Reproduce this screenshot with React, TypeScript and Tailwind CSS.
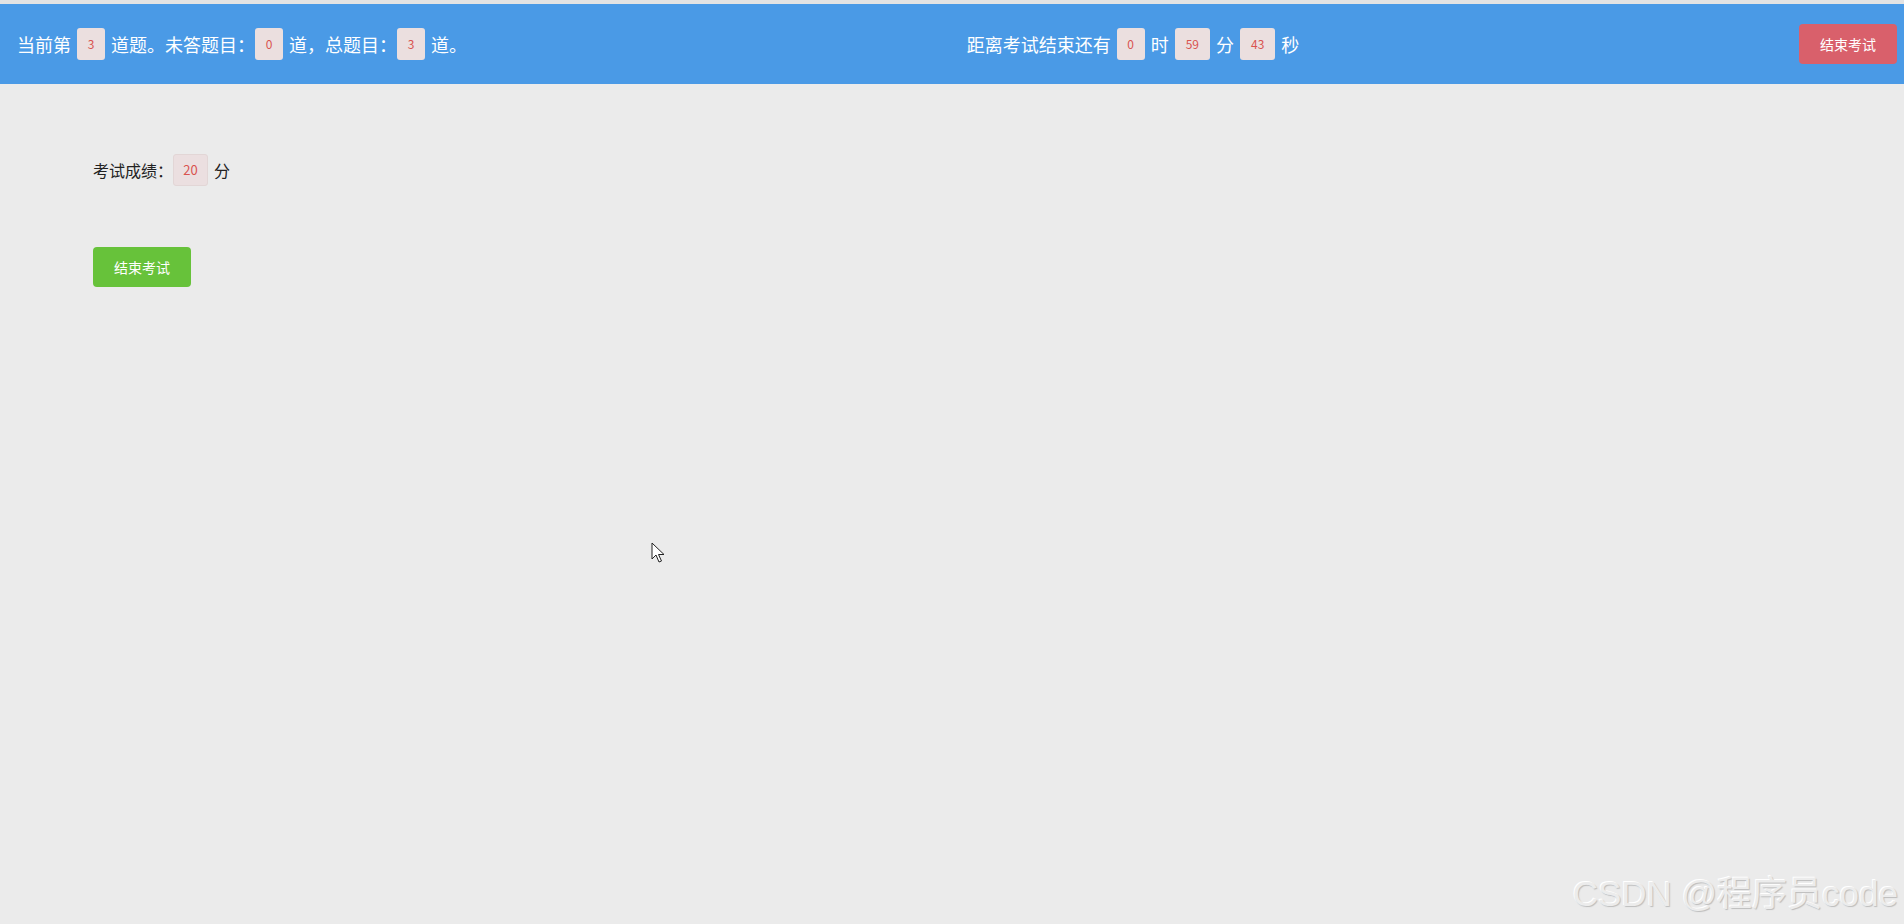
const Badge = ({ value, className = "" }: { value: string; className?: string }) => {
  return (
    <span
      className={`inline-flex items-center justify-center h-[32px] min-w-[28px] px-[10px] rounded-[3px] bg-[#ebdfdf] text-[#d9534f] text-[12px] leading-none ${className}`}
    >
      {value}
    </span>
  );
};

function Cursor() {
  return (
    <svg
      className="absolute left-[651px] top-[542px]"
      width="14"
      height="22"
      viewBox="0 0 14 22"
    >
      <path
        d="M1 1 L1 17 L5 13 L8 20 L10.5 19 L7.5 12.5 L13 12.5 Z"
        fill="#fff"
        stroke="#222"
        strokeWidth="1"
        strokeLinejoin="round"
      />
    </svg>
  );
}

export default function App() {
  return (
    <div
      className="relative h-[924px] w-full overflow-hidden bg-[#ebebeb]"
      style={{ fontFamily: '"Microsoft YaHei", "Noto Sans CJK SC", sans-serif' }}
    >
      <div className="h-[4px] bg-[#e3e3e3]" />
      <header className="h-[80px] bg-[#4a9ae6] flex items-center justify-between pl-[17px] pr-[7px] text-white text-[18px]">
        <div className="flex items-center">
          <span>当前第</span>
          <Badge value="3" className="mx-[6px]" />
          <span>道题。未答题目：</span>
          <Badge value="0" className="mr-[6px]" />
          <span>道，总题目：</span>
          <Badge value="3" className="mr-[6px]" />
          <span>道。</span>
        </div>
        <div className="flex items-center">
          <span>距离考试结束还有</span>
          <Badge value="0" className="mx-[6px]" />
          <span>时</span>
          <Badge value="59" className="mx-[6px] px-[11px]" />
          <span>分</span>
          <Badge value="43" className="mx-[6px] px-[11px]" />
          <span>秒</span>
        </div>
        <button className="w-[98px] h-[40px] rounded-[4px] bg-[#d9606b] text-white text-[14px]">
          结束考试
        </button>
      </header>

      <main className="pl-[93px] pt-[70px] flex flex-col items-start">
        <div className="flex items-center text-[16px] text-[#222]">
          <span>考试成绩：</span>
          <span className="inline-flex items-center justify-center h-[32px] w-[35px] mr-[6px] rounded-[3px] border border-[#e2d6d6] bg-[#ebdfe0] text-[#d9534f] text-[13px]">
            20
          </span>
          <span>分</span>
        </div>
        <button className="mt-[61px] w-[98px] h-[40px] rounded-[4px] bg-[#67c23a] text-white text-[14px]">
          结束考试
        </button>
      </main>

      <Cursor />

      <div
        className="absolute right-[6px] bottom-[13px] text-[35px] leading-none text-[#ececec]"
        style={{
          fontFamily: '"Liberation Sans", "Noto Sans CJK SC", sans-serif',
          textShadow: "1px 1px 1px #bdbdbd, -1px -1px 0px #ffffff",
        }}
      >
        CSDN @程序员code
      </div>
    </div>
  );
}
